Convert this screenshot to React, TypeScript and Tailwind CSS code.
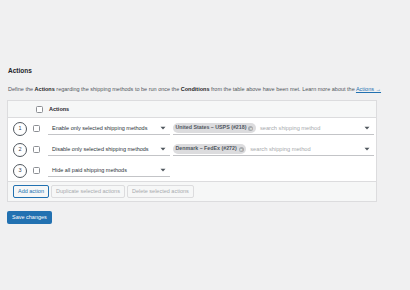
const rows = [
  { n: 1, action: "Enable only selected shipping methods", chip: "United States – USPS (#218)" },
  { n: 2, action: "Disable only selected shipping methods", chip: "Denmark – FedEx (#272)" },
  { n: 3, action: "Hide all paid shipping methods", chip: null },
];

function Caret() {
  return (
    <svg width="6" height="4" viewBox="0 0 6 4" className="shrink-0">
      <path d="M0.5 0.8 L3 3.4 L5.5 0.8 Z" fill="#50575e" />
    </svg>
  );
}

function Checkbox() {
  return <span className="block w-[7px] h-[7px] shrink-0 rounded-[1.5px] border border-[#8c8f94] bg-white" />;
}

export default function App() {
  return (
    <div
      className="w-[410px] h-[290px] bg-[#f0f0f1] text-[#3c434a] pt-[66px] px-[7px]"
      style={{ fontFamily: '"Liberation Sans", Arial, sans-serif' }}
    >
      <h2 className="text-[6.5px] font-bold text-[#1d2327] pl-[1px] leading-[10px]">Actions</h2>
      <p className="mt-[9px] text-[5.5px] leading-[8px] pl-[1px] text-[#50575e] whitespace-nowrap">
        Define the <b className="text-[#1d2327]">Actions</b> regarding the shipping methods to be run once the{" "}
        <b className="text-[#1d2327]">Conditions</b> from the table above have been met. Learn more about the{" "}
        <span className="text-[#2271b1] underline">Actions →</span>
      </p>

      <div className="mt-[7px] w-[370px] border border-[#dcdcde] bg-white">
        <div className="h-[17px] flex items-center bg-[#f6f7f7] border-b border-[#dcdcde] pl-[28px] gap-[6px]">
          <Checkbox />
          <span className="text-[5.5px] font-bold text-[#1d2327]">Actions</span>
        </div>

        <div className="flex flex-col">
          {rows.map((r) => (
            <div key={r.n} className="h-[21px] flex items-center pl-[5px]">
              <span className="w-[14px] h-[14px] shrink-0 rounded-full border border-[#50575e] flex items-center justify-center text-[5.5px] text-[#3c434a]">
                {r.n}
              </span>
              <span className="ml-[6px]">
                <Checkbox />
              </span>
              <div className="ml-[8px] w-[122px] h-[13px] flex items-center justify-between border-b border-[#c3c4c7] pl-[4px] pr-[4px]">
                <span className="text-[5.5px] text-[#2c3338] whitespace-nowrap">{r.action}</span>
                <Caret />
              </div>
              {r.chip && (
                <div className="ml-[3px] w-[201px] h-[13px] flex items-center border-b border-[#c3c4c7] pr-[4px]">
                  <span className="flex items-center gap-[2px] h-[10px] rounded-full bg-[#dcdcde] px-[2.5px] text-[5.3px] font-bold text-[#50575e] whitespace-nowrap">
                    {r.chip}
                    <span className="w-[5px] h-[5px] rounded-full bg-[#a7aaad] text-white text-[4px] leading-[5px] text-center">×</span>
                  </span>
                  <span className="ml-[4px] text-[5.7px] text-[#a7aaad] whitespace-nowrap">search shipping method</span>
                  <span className="ml-auto">
                    <Caret />
                  </span>
                </div>
              )}
            </div>
          ))}
        </div>

        <div className="h-[20px] flex items-center gap-[2px] bg-[#f6f7f7] border-t border-[#dcdcde] pl-[5px]">
          <button className="h-[13px] px-[4px] rounded-[2px] border border-[#2271b1] bg-[#f6f7f7] text-[5.5px] text-[#2271b1]">
            Add action
          </button>
          <button className="h-[13px] px-[4px] rounded-[2px] border border-[#dcdcde] bg-[#f6f7f7] text-[5.5px] text-[#a7aaad]">
            Duplicate selected actions
          </button>
          <button className="h-[13px] px-[4px] rounded-[2px] border border-[#dcdcde] bg-[#f6f7f7] text-[5.5px] text-[#a7aaad]">
            Delete selected actions
          </button>
        </div>
      </div>

      <button className="mt-[7px] h-[13px] px-[5px] rounded-[2px] bg-[#2271b1] text-white text-[5.5px]">
        Save changes
      </button>
    </div>
  );
}
